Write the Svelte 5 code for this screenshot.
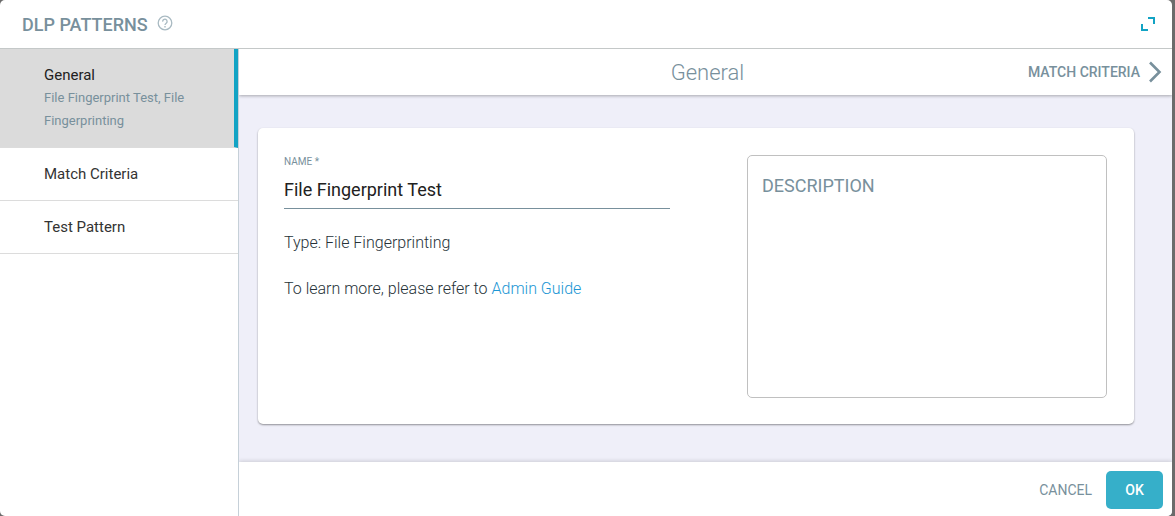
<script>
  const steps = [
    { id: 'general', title: 'General' },
    { id: 'match', title: 'Match Criteria' },
    { id: 'test', title: 'Test Pattern' }
  ];

  let current = $state(0);
  let expanded = $state(false);
  let name = $state('File Fingerprint Test');
  let description = $state('');
  let type = 'File Fingerprinting';

  let nextStep = $derived(steps[current + 1]);
  let summary = $derived([name, type].join(', '));

  const goTo = (i) => (current = i);
</script>

<div class="backdrop">
  <div class="dialog" class:expanded role="dialog" aria-labelledby="dialog-title">
    <header class="dialog-header">
      <h1 id="dialog-title">DLP PATTERNS</h1>
      <button class="icon-btn help" aria-label="Help">
        <svg width="16" height="16" viewBox="0 0 16 16" fill="none" stroke="currentColor">
          <circle cx="8" cy="8" r="6.8" stroke-width="1.3" />
          <path d="M5.7 6.6a2.2 2.2 0 1 1 3.5 1.6C8.4 8.8 8 9.1 8 10" stroke-width="1.3" />
          <path d="M8 11v1.4" stroke-width="1.4" />
        </svg>
      </button>
      <button class="icon-btn expand" aria-label="Expand" onclick={() => (expanded = !expanded)}>
        <svg width="14" height="14" viewBox="0 0 14 14" fill="none" stroke="currentColor" stroke-width="2">
          <path d="M7 1h6v6M1 7v6h6" />
        </svg>
      </button>
    </header>

    <div class="dialog-body">
      <nav class="steps">
        {#each steps as step, i (step.id)}
          <button class="step" class:active={i === current} onclick={() => goTo(i)}>
            <span class="step-title">{step.title}</span>
            {#if step.id === 'general'}
              <span class="step-summary">{summary}</span>
            {/if}
          </button>
        {/each}
      </nav>

      <main class="content">
        <div class="content-header">
          <h2>{steps[current].title}</h2>
          {#if nextStep}
            <button class="next-btn" onclick={() => goTo(current + 1)}>
              {nextStep.title}
              <svg width="14" height="22" viewBox="0 0 14 22" fill="none" stroke="currentColor" stroke-width="2.6">
                <path d="M2 1.5 11.5 11 2 20.5" />
              </svg>
            </button>
          {/if}
        </div>

        <div class="content-body">
          <section class="card">
            <div class="fields">
              <label class="name-label" for="name">NAME *</label>
              <input id="name" type="text" bind:value={name} required />
              <p>Type: {type}</p>
              <p>To learn more, please refer to <a href="#guide">Admin Guide</a></p>
            </div>
            <textarea aria-label="Description" placeholder="DESCRIPTION" bind:value={description}></textarea>
          </section>
        </div>

        <footer class="actions">
          <button class="btn">CANCEL</button>
          <button class="btn primary">OK</button>
        </footer>
      </main>
    </div>
  </div>
</div>

<style>
  :global(body) {
    background: #6b6b6b;
  }

  .backdrop {
    box-sizing: border-box;
    min-height: 100vh;
    padding-right: 3px;
    display: flex;
    background: #6b6b6b;
    font-family: Roboto, sans-serif;
    color: #263238;
  }

  .backdrop :is(button, input, textarea) {
    font-family: inherit;
    border: 0;
    padding: 0;
    margin: 0;
    background: none;
    outline: none;
  }

  .backdrop button {
    cursor: pointer;
  }

  .dialog {
    flex: 1;
    min-width: 0;
    display: flex;
    flex-direction: column;
    overflow: hidden;
    border-radius: 5px;
    background: #fff;
  }

  .dialog.expanded {
    border-radius: 0;
  }

  .dialog-header {
    display: flex;
    align-items: center;
    height: 48px;
    padding: 0 17px 0 22px;
    border-bottom: 1px solid #c4c8c8;
  }

  h1 {
    margin: 0;
    font-size: 18px;
    font-weight: 500;
    color: #78909c;
  }

  .icon-btn {
    display: flex;
  }

  .backdrop .help {
    margin: 0 0 3px 9px;
    color: #a9bac2;
  }

  .backdrop .expand {
    margin-left: auto;
    color: #12a3c4;
  }

  .dialog-body {
    flex: 1;
    display: flex;
  }

  .steps {
    flex: 0 0 238px;
    border-right: 1px solid #c6d0d8;
  }

  .backdrop .step {
    box-sizing: border-box;
    display: block;
    width: 100%;
    padding: 15px 40px 15px 44px;
    border-bottom: 1px solid #dcdcdc;
    text-align: left;
    line-height: 22px;
    color: #333;
  }

  .backdrop .step.active {
    border-right: 4px solid #12a3c4;
    background: #dbdbdb;
    color: #212121;
  }

  .step-title {
    display: block;
    font-size: 15px;
  }

  .step-summary {
    display: block;
    font-size: 13px;
    line-height: 23px;
    color: #78909c;
  }

  .content {
    flex: 1;
    min-width: 0;
    display: flex;
    flex-direction: column;
    background: #efeff9;
  }

  .content-header {
    display: grid;
    grid-template-columns: 1fr auto 1fr;
    align-items: center;
    height: 46px;
    padding: 0 10px;
    background: #fff;
    box-shadow: 0 1px 3px rgba(0, 0, 0, 0.3);
    /* keeps the shadow off the header line above */
    clip-path: inset(0 0 -6px 0);
  }

  h2 {
    grid-column: 2;
    margin: 0;
    padding-left: 4px;
    font-size: 22px;
    font-weight: 300;
    color: #78909c;
  }

  .next-btn {
    justify-self: end;
    display: flex;
    align-items: center;
    gap: 8px;
    font-size: 14px;
    font-weight: 500;
    text-transform: uppercase;
    color: #78909c;
  }

  .content-body {
    flex: 1;
    padding: 33px 38px 37px 19px;
  }

  .card {
    display: grid;
    grid-template-columns: 386fr 360fr;
    gap: 77px;
    padding: 27px 27px 26px 26px;
    border-radius: 5px;
    background: #fff;
    box-shadow: 0 1px 2px rgba(0, 0, 0, 0.4);
  }

  .name-label {
    display: block;
    font-size: 10px;
    line-height: 14px;
    color: #78909c;
  }

  .backdrop input {
    box-sizing: border-box;
    display: block;
    width: 100%;
    height: 40px;
    padding-top: 2px;
    border-bottom: 1px solid #78909c;
    font-size: 18px;
    color: #212121;
  }

  p {
    margin: 22px 0;
    font-size: 16px;
    font-weight: 300;
    line-height: 24px;
  }

  a {
    color: #1c96d4;
    text-decoration: none;
  }

  .backdrop textarea {
    box-sizing: border-box;
    display: block;
    width: 100%;
    height: 243px;
    padding: 18px 14px;
    border: 1px solid #c0c0c0;
    border-radius: 5px;
    resize: none;
    font-size: 18px;
    line-height: 24px;
    color: #212121;
  }

  textarea::placeholder {
    color: #78909c;
  }

  .actions {
    display: flex;
    justify-content: flex-end;
    align-items: center;
    gap: 14px;
    padding: 9px 9px 7px;
    background: #fff;
    box-shadow: 0 -1px 4px rgba(0, 0, 0, 0.15);
    clip-path: inset(-6px 0 0 0);
  }

  .backdrop .btn {
    height: 38px;
    font-size: 14px;
    color: #78909c;
  }

  .backdrop .btn.primary {
    width: 57px;
    border-radius: 5px;
    background: #36afc9;
    font-weight: 500;
    color: #fff;
  }
</style>
